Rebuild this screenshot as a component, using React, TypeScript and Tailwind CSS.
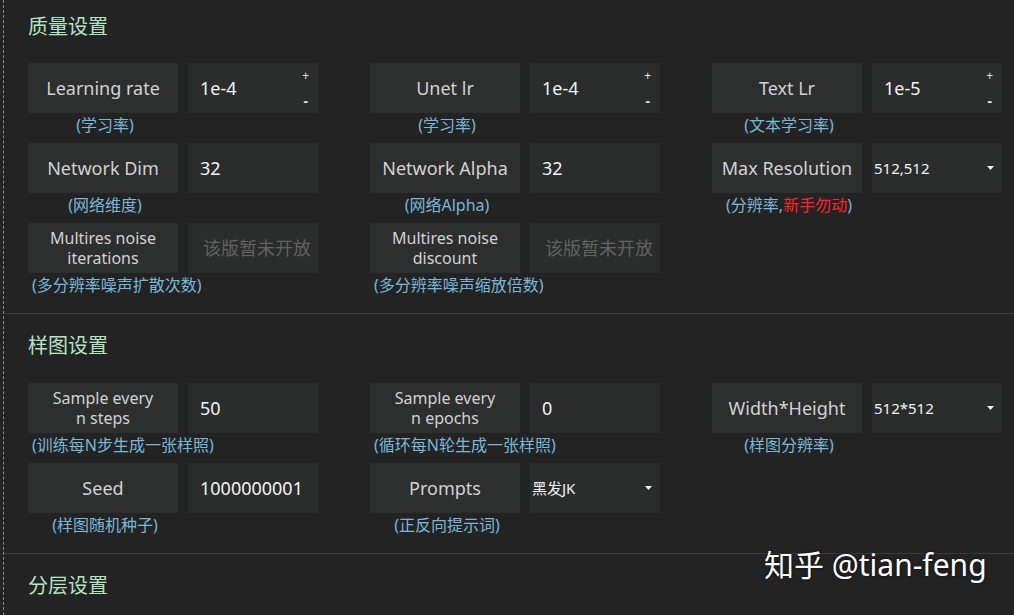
import React from "react";

type Field = {
  label: React.ReactNode;
  twoLine?: boolean;
  kind: "spin" | "text" | "select" | "disabled";
  value: string;
  sub: React.ReactNode;
};

function Sub({ children }: { children: React.ReactNode }) {
  return (
    <div className="h-[30px] w-[150px] whitespace-nowrap pl-[4px] text-center text-[16px] leading-[24px] text-[#79b7d9]">
      {children}
    </div>
  );
}

function Group({ f }: { f: Field | null }) {
  if (!f) return <div className="w-[290px]" />;
  return (
    <div className="flex w-[290px] flex-col">
      <div className="flex h-[50px] gap-[10px]">
        <div
          className={
            "flex w-[150px] items-center justify-center bg-[#2d2e2e] text-center text-[#d2d2d2] " +
            (f.twoLine ? "text-[16px] leading-[20px]" : "text-[18px]")
          }
        >
          {f.label}
        </div>
        <div className="relative flex w-[130px] items-center bg-[#2b2c2c]">
          {f.kind === "spin" && (
            <>
              <span className="pl-[12px] text-[18px] text-[#f2f2f2]">{f.value}</span>
              <span className="absolute right-[9px] top-[5px] text-[12px] leading-[16px] text-[#e0e0e0]">+</span>
              <span className="absolute right-[10px] top-[30px] text-[14px] font-bold leading-[16px] text-[#e0e0e0]">-</span>
            </>
          )}
          {f.kind === "text" && (
            <span className="pl-[12px] text-[18px] text-[#f2f2f2]">{f.value}</span>
          )}
          {f.kind === "disabled" && (
            <span className="pl-[15px] text-[18px] text-[#626262]">{f.value}</span>
          )}
          {f.kind === "select" && (
            <>
              <span className="pl-[2px] text-[15px] text-[#f2f2f2]">{f.value}</span>
              <svg
                className="absolute right-[8px] top-[23px]"
                width="7"
                height="4"
                viewBox="0 0 7 4"
              >
                <path d="M0 0 L7 0 L3.5 4 Z" fill="#f0f0f0" />
              </svg>
            </>
          )}
        </div>
      </div>
      <Sub>{f.sub}</Sub>
    </div>
  );
}

function Row({ items }: { items: (Field | null)[] }) {
  return (
    <div className="flex gap-[52px]">
      {items.map((f, i) => (
        <Group key={i} f={f} />
      ))}
    </div>
  );
}

function Title({ children }: { children: React.ReactNode }) {
  return <div className="h-[26px] text-[20px] leading-[26px] text-[#b5e3c3]">{children}</div>;
}

export default function App() {
  const s1: (Field | null)[][] = [
    [
      { label: "Learning rate", kind: "spin", value: "1e-4", sub: "(学习率)" },
      { label: "Unet lr", kind: "spin", value: "1e-4", sub: "(学习率)" },
      { label: "Text Lr", kind: "spin", value: "1e-5", sub: "(文本学习率)" },
    ],
    [
      { label: "Network Dim", kind: "text", value: "32", sub: "(网络维度)" },
      { label: "Network Alpha", kind: "text", value: "32", sub: "(网络Alpha)" },
      {
        label: "Max Resolution",
        kind: "select",
        value: "512,512",
        sub: (
          <span>
            (分辨率,<span className="text-[#ff2424]">新手勿动</span>)
          </span>
        ),
      },
    ],
    [
      {
        label: (
          <span>
            Multires noise
            <br />
            iterations
          </span>
        ),
        twoLine: true,
        kind: "disabled",
        value: "该版暂未开放",
        sub: "(多分辨率噪声扩散次数)",
      },
      {
        label: (
          <span>
            Multires noise
            <br />
            discount
          </span>
        ),
        twoLine: true,
        kind: "disabled",
        value: "该版暂未开放",
        sub: "(多分辨率噪声缩放倍数)",
      },
      null,
    ],
  ];
  const s2: (Field | null)[][] = [
    [
      {
        label: (
          <span>
            Sample every
            <br />
            n steps
          </span>
        ),
        twoLine: true,
        kind: "text",
        value: "50",
        sub: "(训练每N步生成一张样照)",
      },
      {
        label: (
          <span>
            Sample every
            <br />
            n epochs
          </span>
        ),
        twoLine: true,
        kind: "text",
        value: "0",
        sub: "(循环每N轮生成一张样照)",
      },
      { label: "Width*Height", kind: "select", value: "512*512", sub: "(样图分辨率)" },
    ],
    [
      { label: "Seed", kind: "text", value: "1000000001", sub: "(样图随机种子)" },
      { label: "Prompts", kind: "select", value: "黑发JK", sub: "(正反向提示词)" },
      null,
    ],
  ];

  return (
    <div
      className="relative h-[615px] w-[1014px] overflow-hidden bg-[#232323]"
      style={{ fontFamily: '"Noto Sans", "Noto Sans CJK SC", sans-serif' }}
    >
      <div className="ml-[3px] h-full border-l border-dashed border-[#8a8a8a]">
        <section className="border-b border-[#3a3a3a] px-[24px] pb-[10px] pt-[14px]">
          <Title>质量设置</Title>
          <div className="mt-[23px] flex flex-col">
            {s1.map((r, i) => (
              <Row key={i} items={r} />
            ))}
          </div>
        </section>
        <section className="border-b border-[#3a3a3a] px-[24px] pb-[10px] pt-[19px]">
          <Title>样图设置</Title>
          <div className="mt-[24px] flex flex-col">
            {s2.map((r, i) => (
              <Row key={i} items={r} />
            ))}
          </div>
        </section>
        <section className="px-[24px] pt-[19px]">
          <Title>分层设置</Title>
        </section>
      </div>
      <div
        className="absolute left-[764px] top-[543px] whitespace-nowrap text-[30px] leading-[44px] text-white"
        style={{ textShadow: "0 0 3px rgba(0,0,0,0.8)" }}
      >
        知乎 @tian-feng
      </div>
    </div>
  );
}
